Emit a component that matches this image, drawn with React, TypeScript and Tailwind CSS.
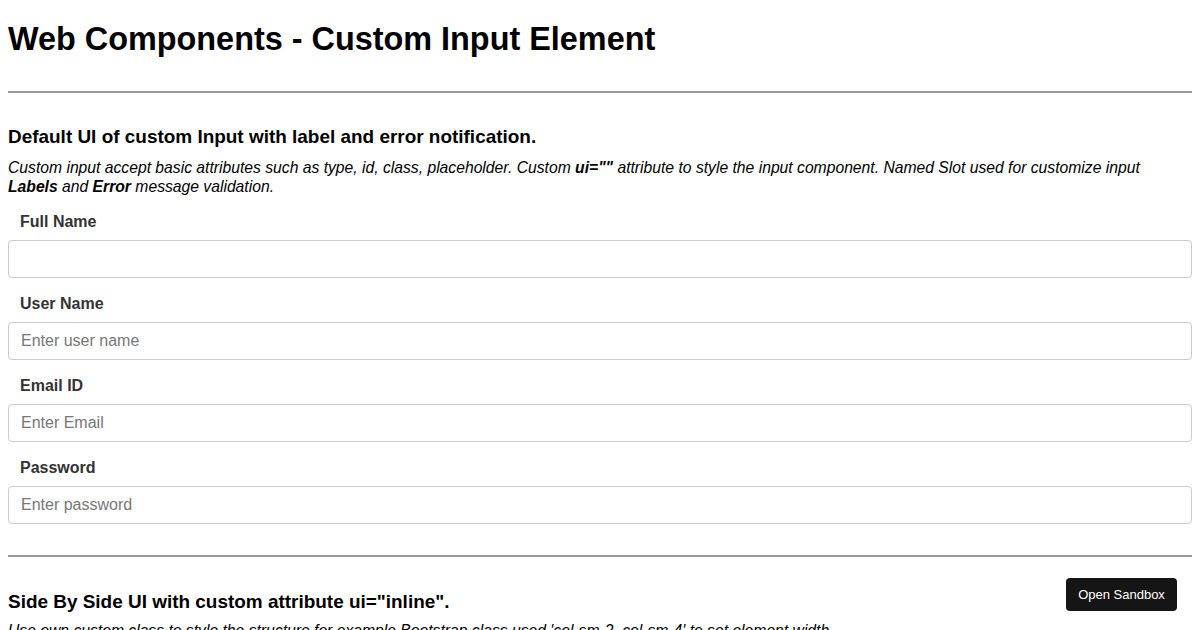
const FIELDS = [
  { id: "full-name", label: "Full Name", type: "text", placeholder: "" },
  { id: "user-name", label: "User Name", type: "text", placeholder: "Enter user name" },
  { id: "email", label: "Email ID", type: "email", placeholder: "Enter Email" },
  { id: "password", label: "Password", type: "password", placeholder: "Enter password" },
] as const;

export default function App() {
  return (
    <div className="min-h-[630px] bg-white px-2 font-['Liberation_Sans',Arial,sans-serif] text-black">
      <h1 className="pt-[21px] text-[32.4px] leading-[37px] font-bold">
        Web Components - Custom Input Element
      </h1>

      <hr className="mt-[33px] border-0 border-t-2 border-[#9a9a9a]" />

      <section>
        <h3 className="mt-[33px] text-[18.95px] leading-[22px] font-bold">
          Default UI of custom Input with label and error notification.
        </h3>
        <p className="mt-[10px] text-[15.7px] leading-[19px] italic">
          Custom input accept basic attributes such as type, id, class,
          placeholder. Custom <b>ui=""</b> attribute to style the input
          component. Named Slot used for customize input <b>Labels</b> and{" "}
          <b>Error</b> message validation.
        </p>

        <form className="mt-[15px] flex flex-col gap-[15px]" action="#">
          {FIELDS.map((f) => (
            <div key={f.id}>
              <label
                htmlFor={f.id}
                className="block px-3 pt-px text-[16px] leading-[20px] font-bold text-[#333]"
              >
                {f.label}
              </label>
              <input
                id={f.id}
                type={f.type}
                placeholder={f.placeholder}
                className="mt-[8px] block h-[38px] w-full rounded-[4px] border border-[#ccc] bg-white px-3 text-[16px] text-[#333] placeholder:text-[#777] focus:outline-none"
              />
            </div>
          ))}
        </form>
      </section>

      <hr className="mt-[31px] border-0 border-t-2 border-[#9a9a9a]" />

      <section>
        <h3 className="mt-[34px] text-[18.95px] leading-[22px] font-bold">
          Side By Side UI with custom attribute ui="inline".
        </h3>
        <p className="mt-[8px] text-[15.7px] leading-[19px] italic">
          Use own custom class to style the structure for example Bootstrap
          class used 'col-sm-2, col-sm-4' to set element width.
        </p>
      </section>

      {/* sandbox embed button */}
      <button
        type="button"
        className="fixed right-[23px] bottom-[19px] h-[33px] w-[111px] rounded-[4px] bg-[#151515] text-[13px] text-white"
      >
        Open Sandbox
      </button>
    </div>
  );
}
